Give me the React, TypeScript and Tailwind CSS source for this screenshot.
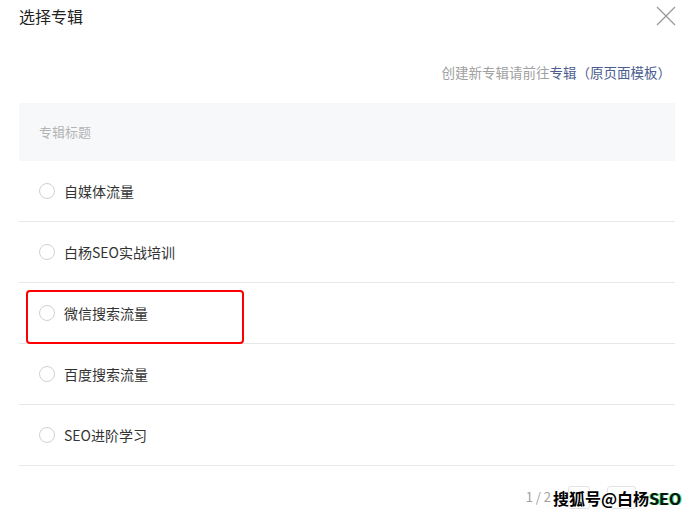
import React, { useState } from 'react';

const albums = ['自媒体流量', '白杨SEO实战培训', '微信搜索流量', '百度搜索流量', 'SEO进阶学习'];

const font = { fontFamily: '"Noto Sans CJK SC", "Liberation Sans", sans-serif' };

export default function App() {
  const [selected, setSelected] = useState<number | null>(null);

  return (
    <div className="relative w-[693px] h-[514px] bg-white overflow-hidden" style={font}>
      <div className="flex items-center justify-between pl-[19px] pr-[17px] pt-[4px] h-[28px]">
        <h2 className="text-[16px] text-[#222] leading-none">选择专辑</h2>
        <button className="w-[20px] h-[20px] text-[#9a9a9a]">
          <svg viewBox="0 0 20 20" width="20" height="20" fill="none" stroke="currentColor" strokeWidth="1.3">
            <path d="M1 1 L19 19 M19 1 L1 19" />
          </svg>
        </button>
      </div>

      <div className="flex justify-end pr-[22px] mt-[35px] text-[13.5px] leading-[18px]">
        <span className="text-[#a0a0a0]">创建新专辑请前往</span>
        <a className="text-[#4b5e8f]">专辑（原页面模板）</a>
      </div>

      <div className="mx-[19px] mt-[22px] w-[656px]">
        <div className="h-[58px] bg-[#f7f8fa] flex items-center pl-[20px] text-[13px] text-[#b4b4b4]">专辑标题</div>
        {albums.map((name, i) => (
          <label
            key={name}
            onClick={() => setSelected(i)}
            className="h-[61px] flex items-center pl-[20px] border-b border-[#e8e8ec] cursor-pointer"
          >
            <span
              className={`w-[16px] h-[16px] rounded-full border ${selected === i ? 'border-[#4b5e8f] border-[5px]' : 'border-[#cfd1d6]'}`}
            />
            <span className="ml-[9px] text-[14px] text-[#333]">{name}</span>
          </label>
        ))}
      </div>

      {/* highlight frame */}
      <div className="absolute left-[26px] top-[290px] w-[218px] h-[54px] border-2 border-[#f00] rounded-[4px]" />

      <div className="flex items-center justify-end pr-[57px] mt-[19px] h-[24px] gap-[17px]">
        <span className="text-[13px] text-[#a0a0a0]">1 / 2</span>
        <span className="w-[22px] h-[23px] border border-[#e4e4e8] rounded-[3px]" />
        <span className="w-[29px] h-[23px] border border-[#e4e4e8] rounded-[3px]" />
      </div>

      {/* watermark */}
      <div
        className="absolute left-[553px] top-[486px] text-[16px] font-bold text-black leading-[24px] whitespace-nowrap"
        style={{ textShadow: '1px 0 #fff, -1px 0 #fff, 0 1px #fff, 0 -1px #fff' }}
      >
        搜狐号@白杨<span className="text-[#111]" style={{ textShadow: '1px 0 #4ade80, -1px 0 #4ade80, 0 1px #fff, 0 -1px #fff' }}>SEO</span>
      </div>
    </div>
  );
}
